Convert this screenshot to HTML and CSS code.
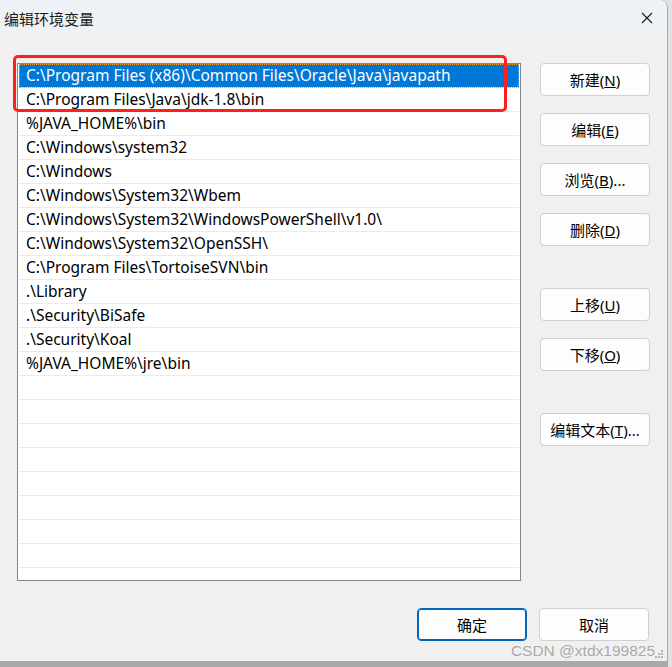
FILE: index.html
```html
<!DOCTYPE html>
<html>
	<head>
		<meta charset="utf-8">
		<title>编辑环境变量</title>
		<link rel="stylesheet" href="styles.css">
	</head>
	<body>
		<!--dialog window-->
		<div class="window">
			<div class="titlebar">
				<span class="title">编辑环境变量</span>
				<span class="close">
					<svg width="12" height="12" viewBox="0 0 12 12">
						<path d="M1 1 L11 11 M11 1 L1 11" stroke="#1b1b1b" stroke-width="1.1" fill="none"/>
					</svg>
				</span>
			</div>
			<div class="main">
				<!--path list-->
				<ul class="paths">
					<li class="selected">C:\Program Files (x86)\Common Files\Oracle\Java\javapath</li>
					<li>C:\Program Files\Java\jdk-1.8\bin</li>
					<li>%JAVA_HOME%\bin</li>
					<li>C:\Windows\system32</li>
					<li>C:\Windows</li>
					<li>C:\Windows\System32\Wbem</li>
					<li>C:\Windows\System32\WindowsPowerShell\v1.0\</li>
					<li>C:\Windows\System32\OpenSSH\</li>
					<li>C:\Program Files\TortoiseSVN\bin</li>
					<li>.\Library</li>
					<li>.\Security\BiSafe</li>
					<li>.\Security\Koal</li>
					<li>%JAVA_HOME%\jre\bin</li>
					<li></li>
					<li></li>
					<li></li>
					<li></li>
					<li></li>
					<li></li>
					<li></li>
					<li></li>
					<li></li>
				</ul>
				<!--side buttons-->
				<div class="actions">
					<div class="group">
						<button>新建(<u>N</u>)</button>
						<button>编辑(<u>E</u>)</button>
						<button>浏览(<u>B</u>)...</button>
						<button>删除(<u>D</u>)</button>
					</div>
					<div class="group">
						<button>上移(<u>U</u>)</button>
						<button>下移(<u>O</u>)</button>
					</div>
					<div class="group">
						<button>编辑文本(<u>T</u>)...</button>
					</div>
				</div>
			</div>
			<div class="footer">
				<button class="primary">确定</button>
				<button>取消</button>
			</div>
			<!--red marker round the java entries-->
			<div class="marker"></div>
			<div class="watermark">CSDN @xtdx199825</div>
			<!--resize grip-->
			<svg class="grip" width="9" height="9" viewBox="0 0 9 9">
				<g fill="#b4b4b4">
					<rect x="6" y="0" width="2" height="2"/>
					<rect x="3" y="3" width="2" height="2"/>
					<rect x="6" y="3" width="2" height="2"/>
					<rect x="0" y="6" width="2" height="2"/>
					<rect x="3" y="6" width="2" height="2"/>
					<rect x="6" y="6" width="2" height="2"/>
				</g>
			</svg>
		</div>
	</body>
</html>
```

FILE: styles.css
```css
html, body{
	margin: 0;
	height: 100%;
}
body{
	background: #e2e2e2;
	font-family: "Noto Sans", "Noto Sans CJK SC", sans-serif;
	overflow: hidden;
}
.window{
	position: relative;
	width: 667px;
	height: 661px;
	background: #f0f0f0;
	border-right: 1px solid #a9a9a9;
	border-top-right-radius: 8px;
	box-shadow: 0 6px 0 #a9a9a9;
}
.titlebar{
	height: 36px;
	background: #eef2f6;
	border-top-right-radius: 8px;
	display: flex;
	align-items: center;
	justify-content: space-between;
	padding: 0 14px 0 4px;
}
.title{
	font-family: "Noto Sans CJK SC", sans-serif;
	font-size: 15px;
	color: #1a1a1a;
}
.close{
	display: flex;
}
.main{
	display: flex;
	gap: 19px;
	padding: 27px 0 0 17px;
}
.paths{
	list-style: none;
	margin: 0;
	padding: 0 1px;
	width: 500px;
	height: 516px;
	background: #fff;
	border: 1px solid #83868c;
	overflow: hidden;
}
.paths li{
	height: 23px;
	line-height: 23px;
	border-bottom: 1px solid #ebebeb;
	padding-left: 7px;
	font-size: 15.5px;
	color: #000;
	white-space: nowrap;
}
.paths li.selected{
	background: #0078d7;
	color: #fff;
	outline: 1px dotted #f0a030;
	outline-offset: -1px;
}
.actions{
	display: flex;
	flex-direction: column;
	gap: 42px;
}
.group{
	display: flex;
	flex-direction: column;
	gap: 17px;
}
button{
	width: 110px;
	height: 33px;
	background: #fdfdfd;
	border: 1px solid #d0d0d0;
	border-radius: 4px;
	font-family: "Noto Sans", "Noto Sans CJK SC", sans-serif;
	font-size: 15px;
	color: #000;
	padding: 0;
}
.footer{
	display: flex;
	justify-content: flex-end;
	gap: 12px;
	padding: 27px 18px 0 0;
}
button.primary{
	border: 1px solid #0067c0;
	box-shadow: inset 0 0 0 1px #0067c0;
}
.marker{
	position: absolute;
	left: 13px;
	top: 55px;
	width: 488px;
	height: 51px;
	border: 3px solid #ff1f1f;
	border-radius: 5px;
}
.watermark{
	position: absolute;
	right: 12px;
	bottom: 1px;
	font-family: "Liberation Sans", sans-serif;
	font-size: 15.5px;
	color: rgba(120, 120, 120, 0.6);
}
.grip{
	position: absolute;
	right: 3px;
	bottom: 2px;
}
```
